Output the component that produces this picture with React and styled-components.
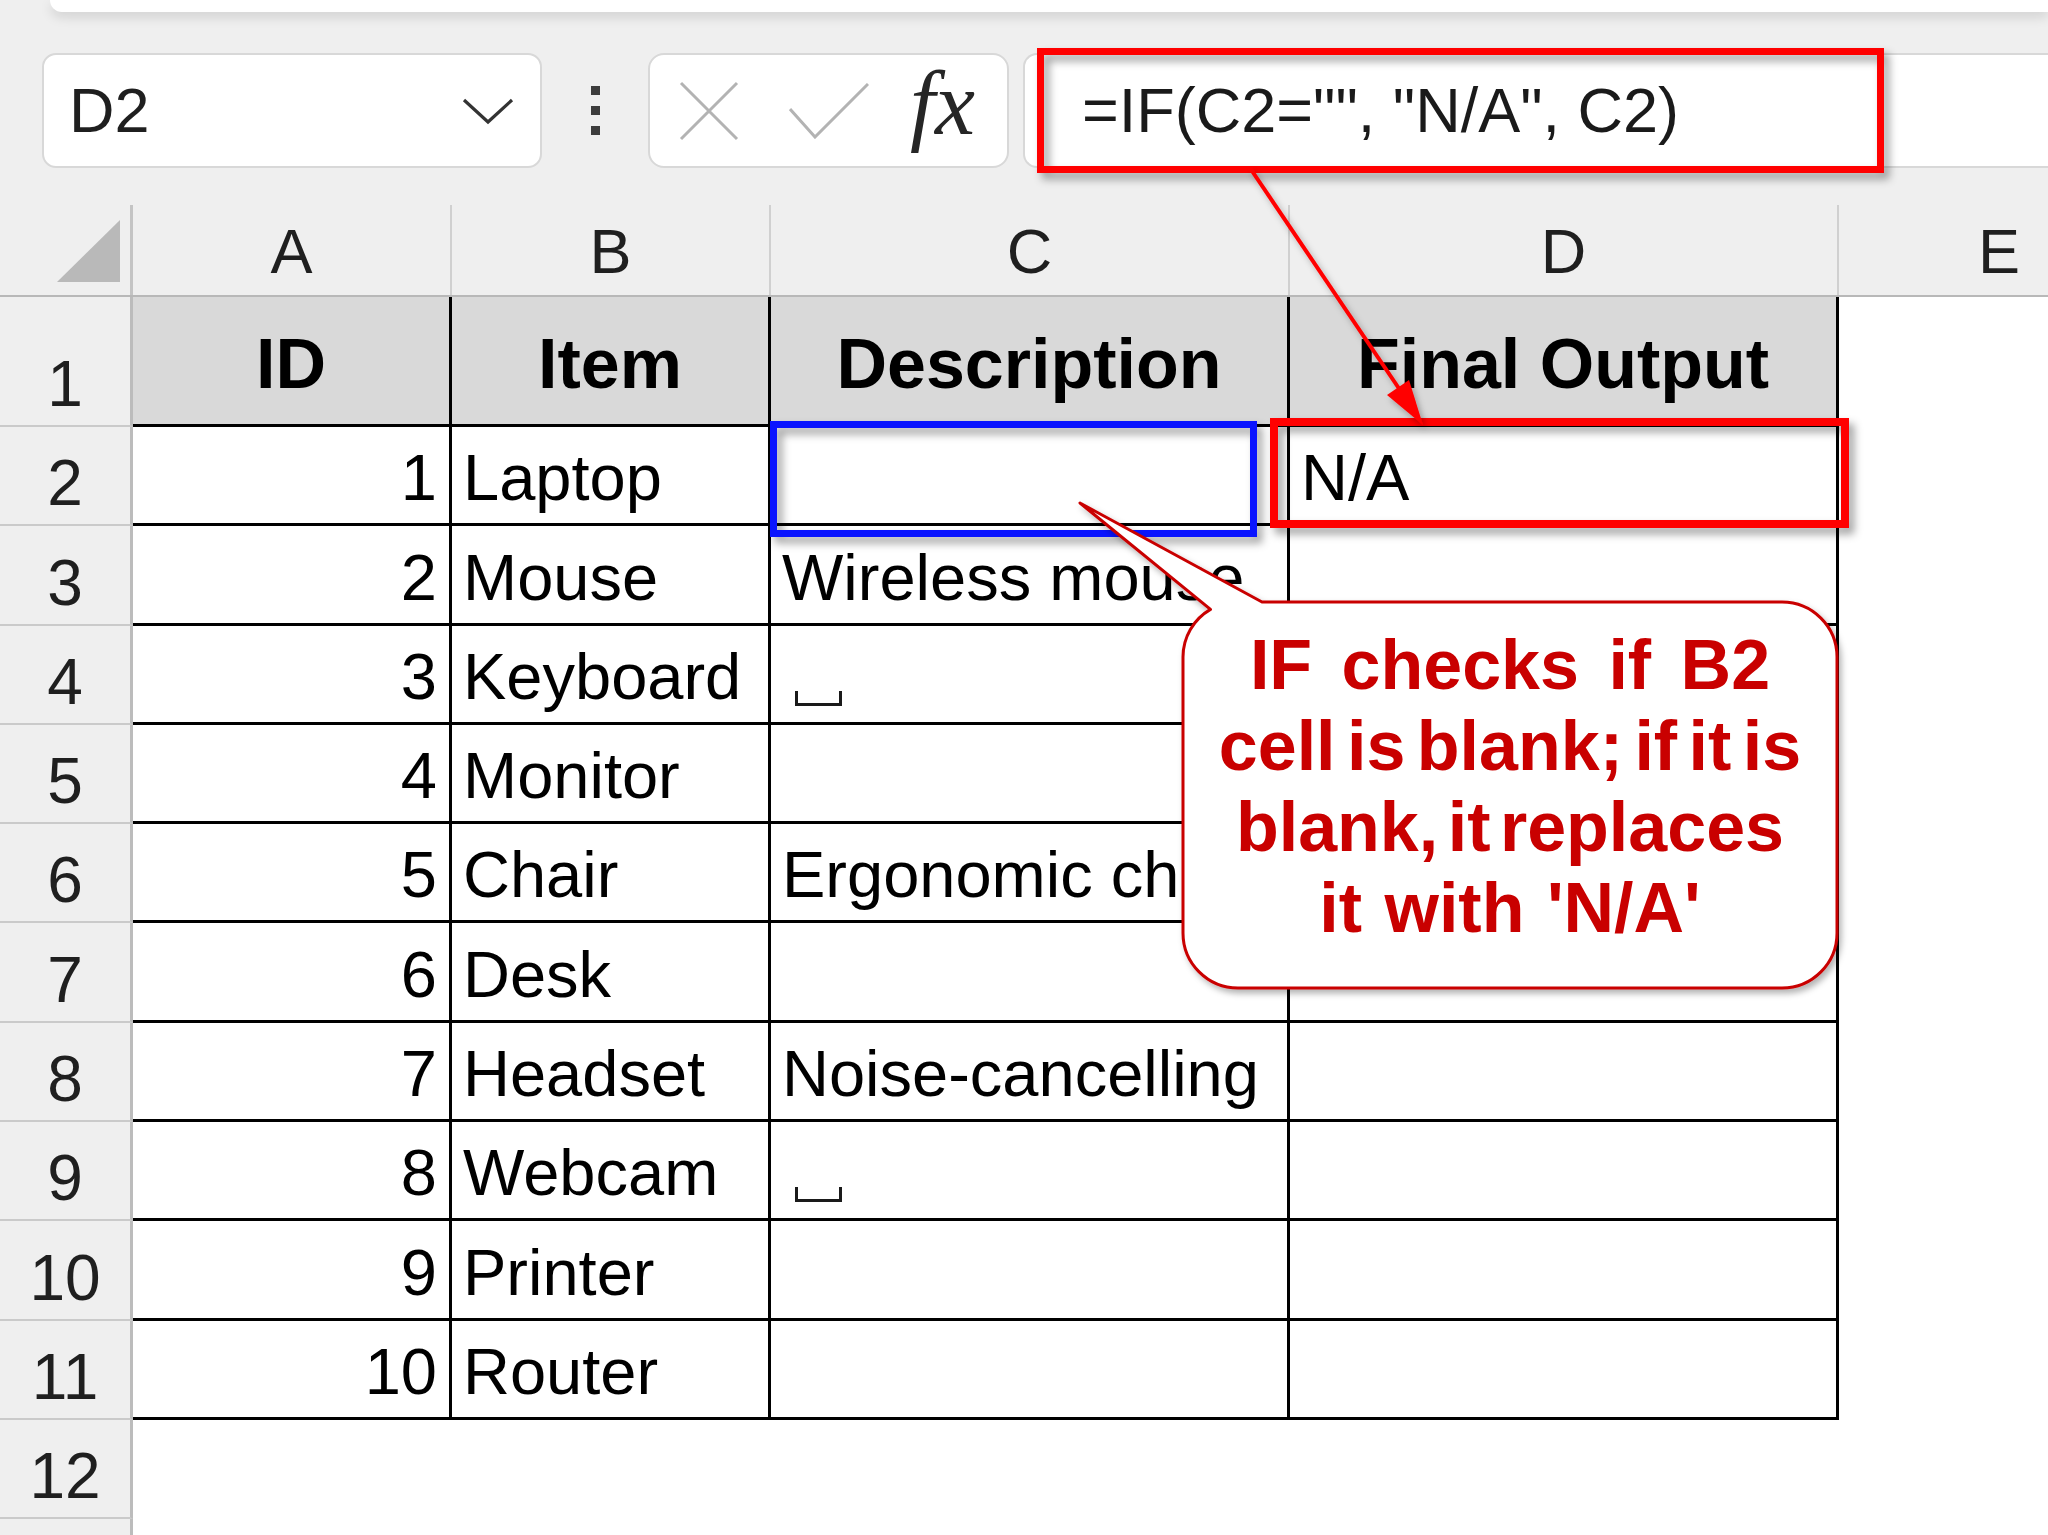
import React from "react";
import styled, { createGlobalStyle } from "styled-components";

const cols = "133px 319px 319px 519px 549px 322px";

const Global = createGlobalStyle`
  *, *::before, *::after { box-sizing: border-box; }
  html, body { margin: 0; padding: 0; background: #efefef; }
  body { font-family: "Liberation Sans", Arial, sans-serif; color: #1f1f1f; }
`;

const Page = styled.div`
  position: relative;
  width: 2048px;
  height: 1535px;
  overflow: hidden;
  background: #efefef;
`;

const RibbonEdge = styled.div`
  height: 12px;
  margin-left: 50px;
  background: #fff;
  border-bottom-left-radius: 22px;
  box-shadow: 0 5px 12px rgba(0, 0, 0, 0.13);
`;

const FormulaBar = styled.div`
  display: flex;
  height: 115px;
  margin-top: 41px;
  padding-left: 42px;
`;

const NameBox = styled.div`
  width: 500px;
  display: flex;
  align-items: center;
  justify-content: space-between;
  padding: 0 26px 0 25px;
  background: #fff;
  border: 2px solid #d8d8d8;
  border-radius: 14px;
  font-size: 63px;
  line-height: 1;
  color: #1f1f1f;
`;

const Dots = styled.div`
  width: 106px;
  display: flex;
  flex-direction: column;
  align-items: center;
  justify-content: center;
  gap: 11px;
  span {
    width: 9px;
    height: 9px;
    background: #3c3c3c;
  }
`;

const FxBox = styled.div`
  width: 361px;
  display: flex;
  align-items: center;
  padding-left: 29px;
  background: #fff;
  border: 2px solid #d8d8d8;
  border-radius: 16px;
  svg { flex: none; }
`;

const Fx = styled.span`
  margin-left: 41px;
  margin-bottom: 14px;
  font-family: "Liberation Serif", "Times New Roman", serif;
  font-style: italic;
  font-size: 90px;
  line-height: 1;
  color: #262626;
`;

const FormulaInput = styled.div`
  flex: 1;
  margin-left: 14px;
  display: flex;
  align-items: center;
  padding-left: 57px;
  background: #fff;
  border: 2px solid #d8d8d8;
  border-right: none;
  border-radius: 14px 0 0 14px;
  font-size: 63px;
  line-height: 1;
  color: #1a1a1a;
  white-space: pre;
`;

const Sheet = styled.div`
  width: 2161px;
  margin-top: 37px;
`;

const GridRow = styled.div`
  display: grid;
  grid-template-columns: ${cols};
  height: ${(p) => p.$h}px;
  border-bottom: ${(p) => (p.$line ? "2px solid #b8b8b8" : "none")};
`;

const Corner = styled.div`
  display: flex;
  justify-content: flex-end;
  align-items: flex-end;
  padding: 0 10px 13px 0;
  border-right: 3px solid #c4c4c4;
`;

const ColLetter = styled.div`
  display: flex;
  justify-content: center;
  align-items: flex-end;
  padding-bottom: 12px;
  border-right: 2px solid #d0d0d0;
  font-size: 63px;
  line-height: 1;
`;

const RowHead = styled.div`
  display: flex;
  justify-content: center;
  align-items: flex-end;
  padding-bottom: 9px;
  background: #efefef;
  border-right: 3px solid #bcbcbc;
  border-bottom: 2px solid #cacaca;
  font-size: 64px;
  line-height: 1;
`;

const Cell = styled.div`
  display: flex;
  align-items: flex-end;
  justify-content: ${(p) =>
    p.$head ? "center" : p.$right ? "flex-end" : "flex-start"};
  overflow: hidden;
  white-space: nowrap;
  padding: ${(p) => (p.$head ? "0 8px 25px" : p.$right ? "0 12px 13px 0" : "0 8px 13px 11px")};
  background: ${(p) => (p.$head ? "#d9d9d9" : "#fff")};
  border-right: ${(p) => (p.$blank ? "none" : "3px solid #000")};
  border-bottom: ${(p) => (p.$blank ? "none" : "3px solid #000")};
  font-family: "Liberation Sans", "DejaVu Sans", sans-serif;
  font-size: ${(p) => (p.$head ? 70 : 65)}px;
  font-weight: ${(p) => (p.$head ? 700 : 400)};
  line-height: 1;
  color: #000;
`;

/* visible-space marker shown in cells that hold a single space */
const SpaceMark = styled.span`
  display: block;
  width: 47px;
  height: 15px;
  margin: 0 0 3px 13px;
  border: 3px solid #1a1a1a;
  border-top: none;
`;

const Mark = styled.div`
  position: absolute;
  left: ${(p) => p.$x}px;
  top: ${(p) => p.$y}px;
  width: ${(p) => p.$w}px;
  height: ${(p) => p.$h}px;
  border: ${(p) => p.$b}px solid ${(p) => p.$c};
  filter: drop-shadow(5px 6px 4px rgba(0, 0, 0, 0.38));
`;

const Overlay = styled.svg`
  position: absolute;
  left: 0;
  top: 0;
  pointer-events: none;
`;

const CalloutText = styled.div`
  position: absolute;
  left: 1183px;
  top: 602px;
  width: 654px;
  height: 386px;
  display: flex;
  flex-direction: column;
  align-items: center;
  justify-content: center;
  padding-bottom: 16px;
  color: #c90000;
  font-family: "Liberation Sans", Arial, sans-serif;
  font-weight: 700;
  font-size: 70px;
  line-height: 81px;
`;

const Line = styled.span`
  white-space: pre;
  word-spacing: ${(p) => p.$ws}px;
`;

const rows = [
  [1, "Laptop", ""],
  [2, "Mouse", "Wireless mouse"],
  [3, "Keyboard", " "],
  [4, "Monitor", ""],
  [5, "Chair", "Ergonomic chair"],
  [6, "Desk", ""],
  [7, "Headset", "Noise-cancelling"],
  [8, "Webcam", " "],
  [9, "Printer", ""],
  [10, "Router", ""],
];

const Chevron = () => (
  <svg width="52" height="28" viewBox="0 0 52 28">
    <polyline points="2,3 26,25 50,3" fill="none" stroke="#333" strokeWidth="3.2" />
  </svg>
);

const Cancel = () => (
  <svg width="60" height="60" viewBox="0 0 60 60">
    <path d="M2 2 L58 58 M58 2 L2 58" stroke="#b3b3b3" strokeWidth="3" />
  </svg>
);

const Enter = () => (
  <svg width="80" height="56" viewBox="0 0 80 56" style={{ marginLeft: 50 }}>
    <polyline points="1,26 26,54 79,1" fill="none" stroke="#b3b3b3" strokeWidth="3" />
  </svg>
);

const SelectAll = () => (
  <svg width="63" height="62" viewBox="0 0 63 62">
    <polygon points="63,0 63,62 0,62" fill="#b9b9b9" />
  </svg>
);

export default function App() {
  return (
    <Page>
      <Global />
      <RibbonEdge />
      <FormulaBar>
        <NameBox>
          <span>D2</span>
          <Chevron />
        </NameBox>
        <Dots>
          <span />
          <span />
          <span />
        </Dots>
        <FxBox>
          <Cancel />
          <Enter />
          <Fx>fx</Fx>
        </FxBox>
        <FormulaInput>{'=IF(C2="", "N/A", C2)'}</FormulaInput>
      </FormulaBar>

      <Sheet>
        <GridRow $h={92} $line>
          <Corner>
            <SelectAll />
          </Corner>
          {["A", "B", "C", "D", "E"].map((l) => (
            <ColLetter key={l}>{l}</ColLetter>
          ))}
        </GridRow>
        <GridRow $h={130}>
          <RowHead>1</RowHead>
          <Cell $head>ID</Cell>
          <Cell $head>Item</Cell>
          <Cell $head>Description</Cell>
          <Cell $head>Final Output</Cell>
          <Cell $blank />
        </GridRow>
        {rows.map(([id, item, desc], i) => (
          <GridRow $h={99.3} key={id}>
            <RowHead>{i + 2}</RowHead>
            <Cell $right>{id}</Cell>
            <Cell>{item}</Cell>
            <Cell>{desc === " " ? <SpaceMark title="space" /> : desc}</Cell>
            <Cell>{i === 0 ? "N/A" : ""}</Cell>
            <Cell $blank />
          </GridRow>
        ))}
        {[12, null].map((n) => (
          <GridRow $h={99.3} key={n ?? "x"}>
            <RowHead>{n}</RowHead>
            <Cell $blank />
            <Cell $blank />
            <Cell $blank />
            <Cell $blank />
            <Cell $blank />
          </GridRow>
        ))}
      </Sheet>

      <Mark $x={770} $y={421} $w={487} $h={116} $b={7} $c="#0a14ff" />
      <Mark $x={1270} $y={418} $w={579} $h={110} $b={8} $c="#ff0000" />
      <Mark $x={1037} $y={48} $w={847} $h={125} $b={7} $c="#ff0000" />

      <Overlay width="2048" height="1535" viewBox="0 0 2048 1535">
        <defs>
          <filter id="sh" x="-10%" y="-10%" width="130%" height="130%">
            <feDropShadow dx="3" dy="4" stdDeviation="3" floodColor="#000" floodOpacity="0.3" />
          </filter>
        </defs>
        <g filter="url(#sh)">
          <line x1="1250" y1="168" x2="1400" y2="390" stroke="#ff0000" strokeWidth="4" />
          <polygon points="1423,425 1387,395 1409,380" fill="#ff0000" />
        </g>
        <path
          filter="url(#sh)"
          d="M1262 602 H1782 A55 55 0 0 1 1837 657 V933 A55 55 0 0 1 1782 988 H1238 A55 55 0 0 1 1183 933 V657 A55 55 0 0 1 1210.5 609.4 L1080 503 Z"
          fill="#fff"
          stroke="#c90000"
          strokeWidth="3"
          strokeLinejoin="round"
        />
      </Overlay>
      <CalloutText>
        <Line $ws={10}>IF checks if B2</Line>
        <Line $ws={-8}>cell is blank; if it is</Line>
        <Line $ws={-10}>blank, it replaces</Line>
        <Line $ws={3}>it with 'N/A'</Line>
      </CalloutText>
    </Page>
  );
}
